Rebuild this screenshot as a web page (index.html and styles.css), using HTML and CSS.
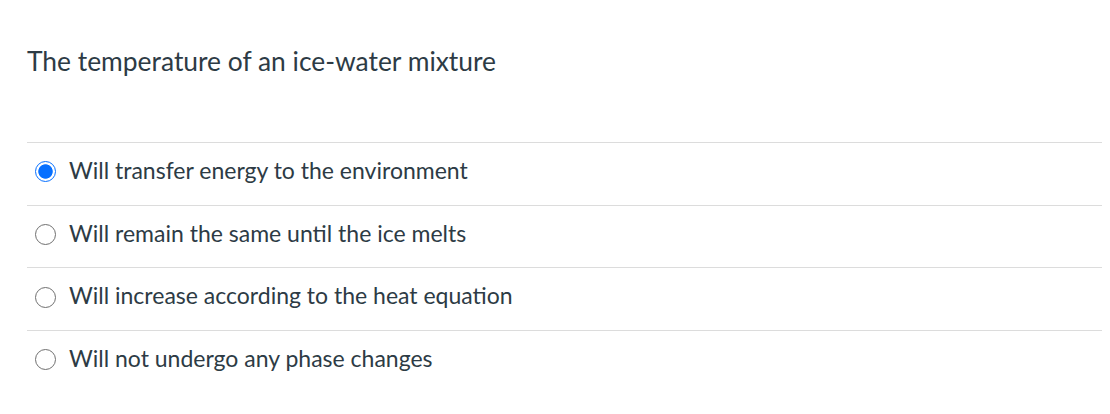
FILE: index.html
```html
<!DOCTYPE html>
<html>
<head>
<meta charset="utf-8">
<link rel="stylesheet" href="styles.css">
</head>
<body>
<div class="question">
  <div class="question-text">The temperature of an ice-water mixture</div>
  <div class="answers">
    <label class="answer"><span class="radio checked"></span><span class="label">Will transfer energy to the environment</span></label>
    <label class="answer"><span class="radio"></span><span class="label">Will remain the same until the ice melts</span></label>
    <label class="answer"><span class="radio"></span><span class="label">Will increase according to the heat equation</span></label>
    <label class="answer"><span class="radio"></span><span class="label">Will not undergo any phase changes</span></label>
  </div>
</div>
</body>
</html>
```
FILE: styles.css
```css
html, body {
  margin: 0;
  padding: 0;
  background: #fff;
}
body {
  font-family: Lato, "Noto Sans", sans-serif;
  color: #2d3b45;
}
.question {
  width: 1075px;
  margin-left: 27px;
  padding-top: 44px;
}
.question-text {
  font-size: 26.4px;
  line-height: 34px;
  margin-bottom: 64px;
}
.answers {
  display: flex;
  flex-direction: column;
}
.answer {
  box-sizing: border-box;
  display: flex;
  align-items: center;
  gap: 13px;
  height: 62.7px;
  border-top: 1px solid #dcdcdc;
  padding-left: 8px;
  padding-bottom: 8px;
  font-size: 23px;
}
.radio {
  box-sizing: border-box;
  width: 21px;
  height: 21px;
  border-radius: 50%;
  border: 1px solid #6f6f6f;
  background: #fff;
  flex: none;
  margin-top: 4px;
}
.radio.checked {
  border: 1.5px solid #0770ff;
  background: radial-gradient(circle, #0770ff 0 6.8px, #fff 7.6px);
}
```
